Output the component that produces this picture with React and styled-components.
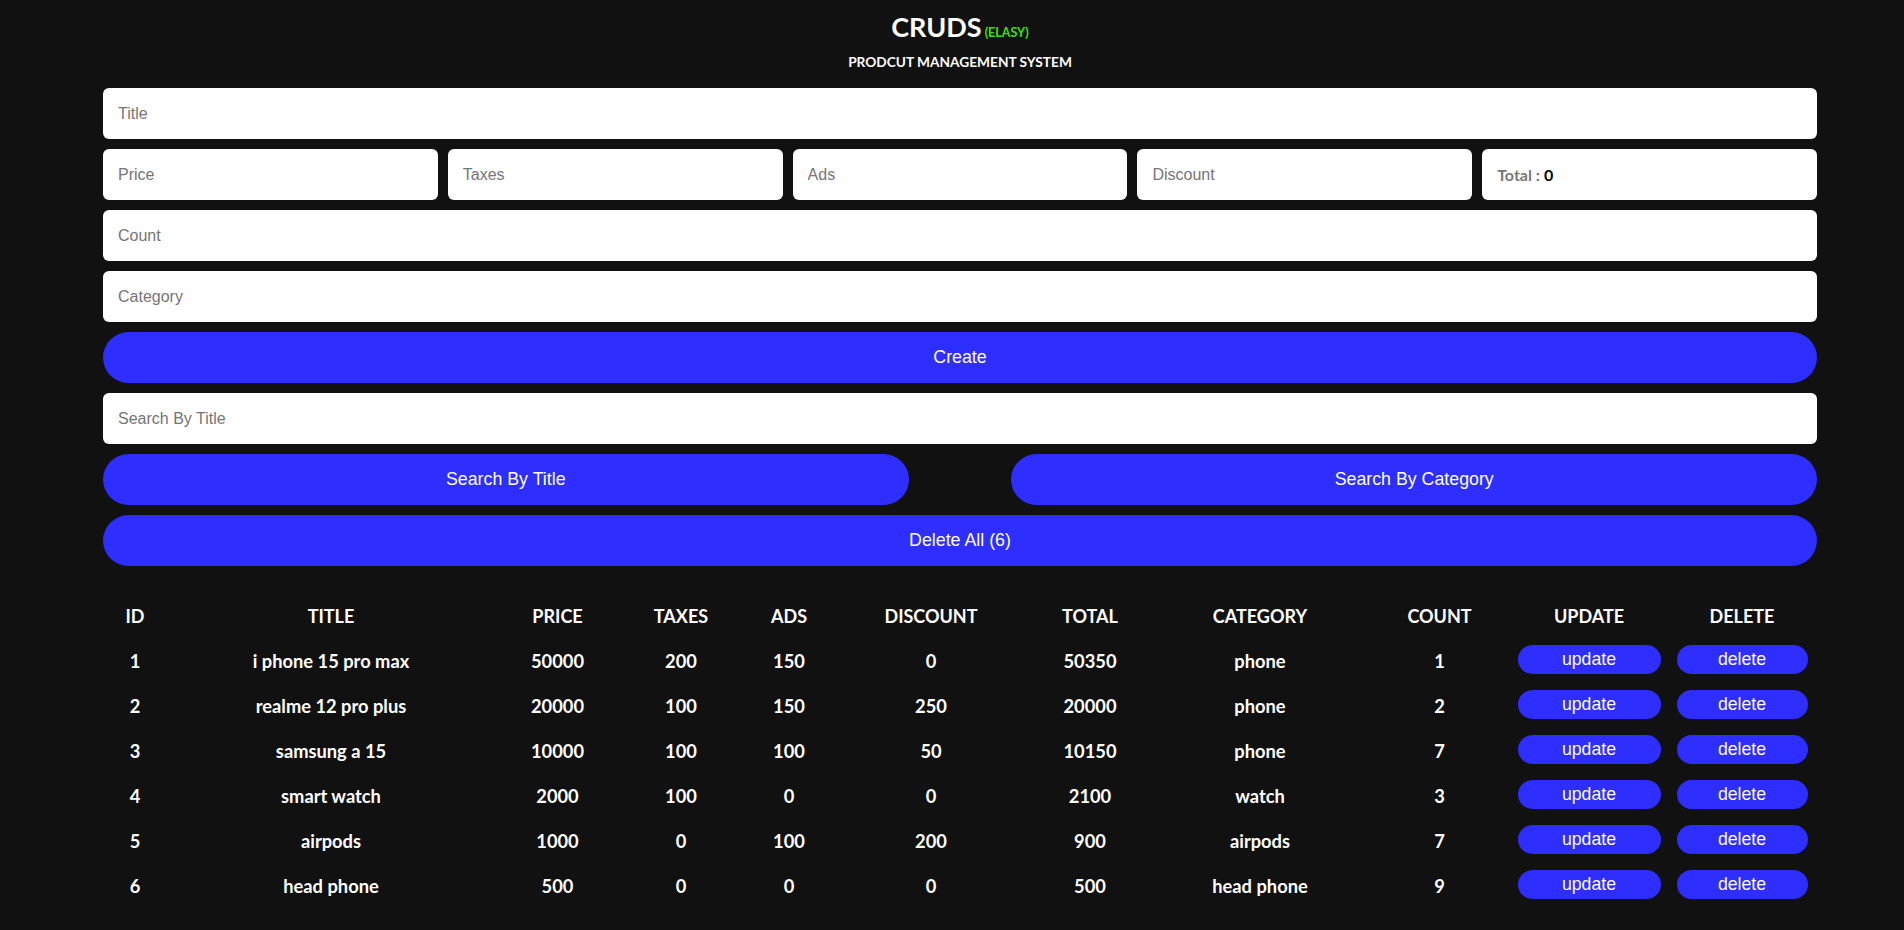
import React from "react";
import styled, { createGlobalStyle } from "styled-components";

const GlobalStyle = createGlobalStyle`
  html, body { margin: 0; padding: 0; background: #111111; }
  body { font-family: "Lato", "Open Sans", sans-serif; color: #fff; overflow: hidden; }
  * { box-sizing: border-box; }
`;

const Page = styled.div`
  padding: 11px 87px 0 103px;
`;

const Header = styled.header`
  text-align: center;
`;

const Brand = styled.h2`
  margin: 0;
  font-size: 27px;
  line-height: 31px;
  font-weight: 700;
  color: #fff;
`;

const Tag = styled.span`
  font-size: 12.5px;
  color: #3ee00b;
  margin-left: 3px;
`;

const Subtitle = styled.p`
  margin: 6px 0 0;
  font-size: 13.7px;
  line-height: 16px;
  font-weight: 700;
`;

const Form = styled.div`
  margin-top: 18px;
  display: flex;
  flex-direction: column;
  gap: 10px;
`;

const Input = styled.input`
  display: block;
  width: 100%;
  height: 51px;
  border: none;
  outline: none;
  border-radius: 6px;
  background: #fff;
  padding: 0 15px;
  font-family: "Liberation Sans", Arial, sans-serif;
  font-size: 16px;
  color: #222;
  &::placeholder { color: #757575; }
`;

const PriceRow = styled.div`
  display: grid;
  grid-template-columns: repeat(5, 1fr);
  gap: 10px;
`;

const TotalBox = styled.div`
  height: 51px;
  border-radius: 6px;
  background: #fff;
  padding: 0 15px;
  display: flex;
  align-items: center;
  font-family: "Lato", sans-serif;
  font-weight: 700;
  font-size: 16px;
  color: #777;
`;

const TotalValue = styled.span`
  color: #000;
  margin-left: 4px;
`;

const Button = styled.button`
  display: block;
  width: ${(p) => p.$w || "100%"};
  height: 51px;
  border: none;
  border-radius: 26px;
  background: #2d2eff;
  color: #fff;
  font-family: "Liberation Sans", Arial, sans-serif;
  font-size: 17.8px;
  cursor: pointer;
`;

const SearchRow = styled.div`
  display: flex;
  justify-content: space-between;
`;

const Table = styled.table`
  width: 1716px;
  margin-top: 28px;
  border-collapse: collapse;
  table-layout: fixed;
`;

const Th = styled.th`
  height: 44px;
  font-size: 18px;
  font-weight: 700;
  text-align: center;
  vertical-align: middle;
  padding: 0;
  color: #fff;
`;

const Td = styled.td`
  height: 45px;
  font-size: 18.3px;
  font-weight: 700;
  text-align: center;
  vertical-align: middle;
  padding: 0;
  color: #fff;
`;

const RowButton = styled.button`
  display: block;
  margin: 0 auto;
  width: ${(p) => p.$w}px;
  height: 29px;
  border: none;
  border-radius: 15px;
  background: #2d2eff;
  color: #fff;
  font-family: "Liberation Sans", Arial, sans-serif;
  font-size: 17.7px;
  line-height: 29px;
  padding: 0 0 2px;
  position: relative;
  top: -1px;
  cursor: pointer;
`;

const cols = [64, 328, 125, 122, 94, 190, 128, 212, 147, 152, 154];
const heads = ["ID", "TITLE", "PRICE", "TAXES", "ADS", "DISCOUNT", "TOTAL", "CATEGORY", "COUNT", "UPDATE", "DELETE"];

const rows = [
  [1, "i phone 15 pro max", 50000, 200, 150, 0, 50350, "phone", 1],
  [2, "realme 12 pro plus", 20000, 100, 150, 250, 20000, "phone", 2],
  [3, "samsung a 15", 10000, 100, 100, 50, 10150, "phone", 7],
  [4, "smart watch", 2000, 100, 0, 0, 2100, "watch", 3],
  [5, "airpods", 1000, 0, 100, 200, 900, "airpods", 7],
  [6, "head phone", 500, 0, 0, 0, 500, "head phone", 9],
];

export default function App() {
  return (
    <>
      <GlobalStyle />
      <Page>
        <Header>
          <Brand>
            CRUDS<Tag>(ELASY)</Tag>
          </Brand>
          <Subtitle>PRODCUT MANAGEMENT SYSTEM</Subtitle>
        </Header>
        <Form>
          <Input placeholder="Title" />
          <PriceRow>
            <Input placeholder="Price" />
            <Input placeholder="Taxes" />
            <Input placeholder="Ads" />
            <Input placeholder="Discount" />
            <TotalBox>
              Total :<TotalValue>0</TotalValue>
            </TotalBox>
          </PriceRow>
          <Input placeholder="Count" />
          <Input placeholder="Category" />
          <Button>Create</Button>
          <Input placeholder="Search By Title" />
          <SearchRow>
            <Button $w="47%">Search By Title</Button>
            <Button $w="47%">Search By Category</Button>
          </SearchRow>
          <Button>Delete All (6)</Button>
        </Form>
        <Table>
          <colgroup>
            {cols.map((w, i) => (
              <col key={i} style={{ width: w }} />
            ))}
          </colgroup>
          <thead>
            <tr>
              {heads.map((h) => (
                <Th key={h}>{h}</Th>
              ))}
            </tr>
          </thead>
          <tbody>
            {rows.map((r) => (
              <tr key={r[0]}>
                {r.map((c, i) => (
                  <Td key={i}>{c}</Td>
                ))}
                <Td>
                  <RowButton $w={143}>update</RowButton>
                </Td>
                <Td>
                  <RowButton $w={131}>delete</RowButton>
                </Td>
              </tr>
            ))}
          </tbody>
        </Table>
      </Page>
    </>
  );
}
